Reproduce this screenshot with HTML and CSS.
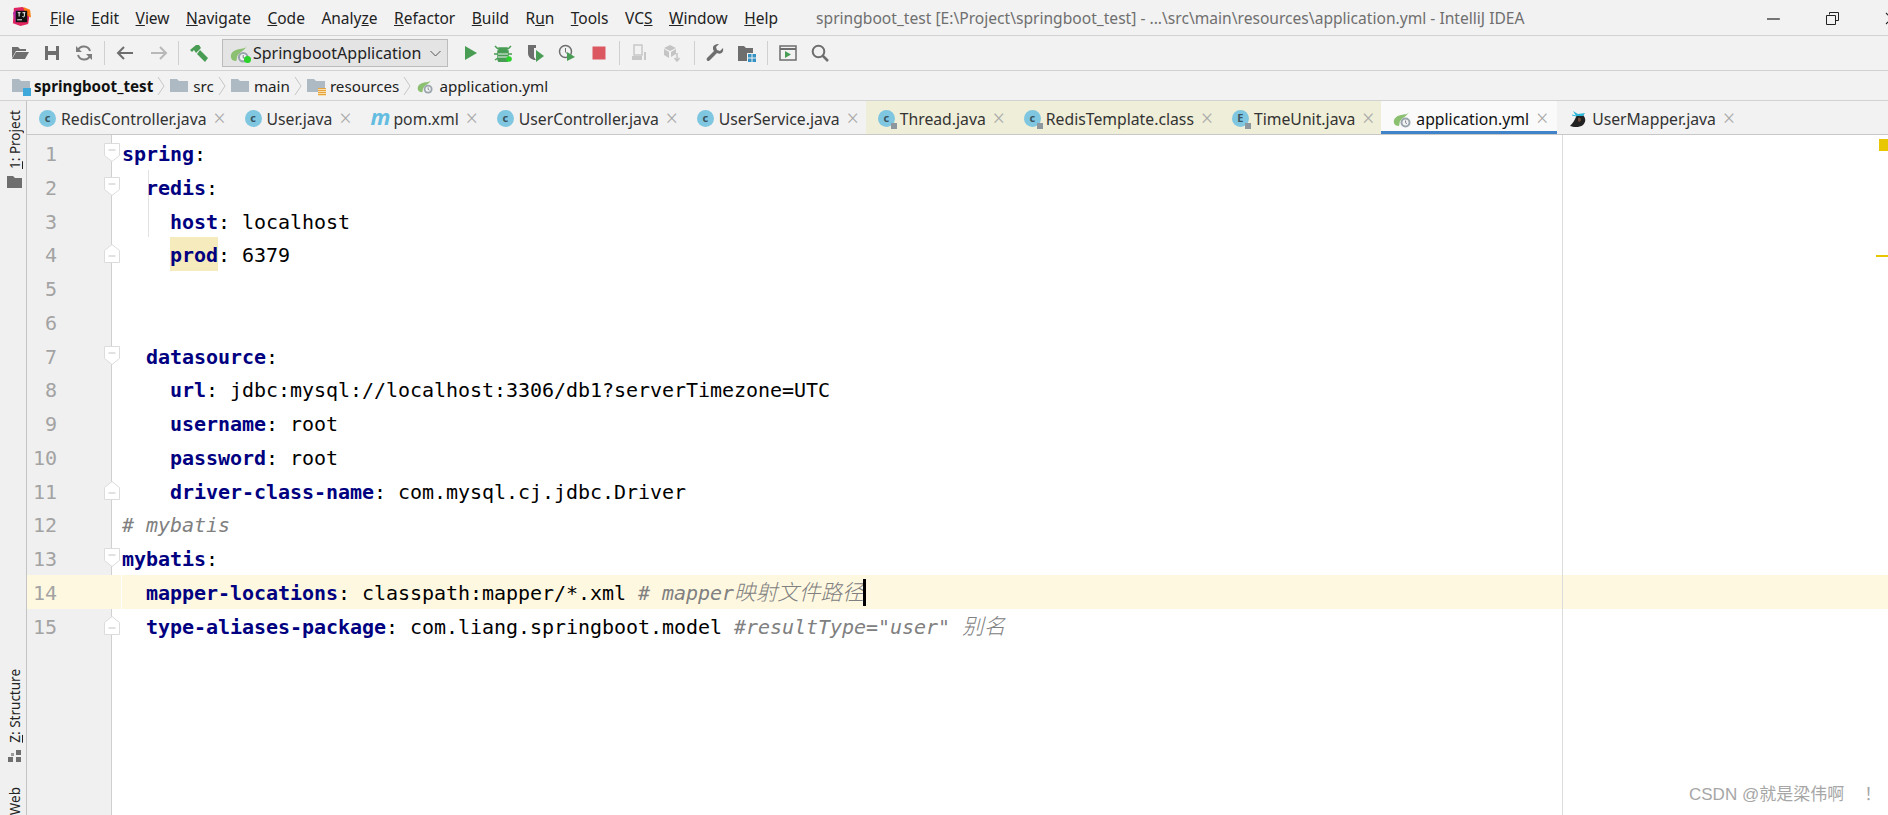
FILE: index.html
```html
<!DOCTYPE html>
<html lang="en">
<head>
<meta charset="utf-8">
<title>application.yml - IntelliJ IDEA</title>
<link rel="stylesheet" href="styles.css">
</head>
<body>
<svg class="defs" width="0" height="0">
  <symbol id="spring" viewBox="0 0 18 18">
    <path d="M16 1C15 5 12 4 8 5 3 6 0 9 1 13c.5 2 2 3 5 3 1-3 0-4 2-6 2-3 7-4 8-9z" fill="#8cc071"/>
    <circle cx="12.5" cy="12.5" r="5" fill="#9aa4ad"/>
    <circle cx="12.5" cy="12.5" r="3" fill="#f2f2f2"/>
    <path d="M12.5 10.5v2.2l1.5 1" stroke="#7a858e" stroke-width="1" fill="none"/>
  </symbol>
  <symbol id="folder" viewBox="0 0 18 16">
    <path d="M0 1h7l2 2h9v11H0z" fill="#aebac3"/>
  </symbol>
  <symbol id="chev" viewBox="0 0 8 20">
    <path d="M1 1l6 9-6 9" fill="none" stroke="#c6c6c6" stroke-width="1"/>
  </symbol>
  <symbol id="foldtop" viewBox="0 0 16 20">
    <path d="M.5 .5h15v12l-7.500 6-7.500-6z" fill="#fff" stroke="#dcdcdc"/>
    <path d="M4.500 7h7" stroke="#c4c4c4"/>
  </symbol>
  <symbol id="foldend" viewBox="0 0 16 20">
    <path d="M.5 19.500h15v-12l-7.500-6-7.500 6z" fill="#fff" stroke="#dcdcdc"/>
    <path d="M4.500 13h7" stroke="#c4c4c4"/>
  </symbol>
</svg>

<header class="titlebar">
  <svg class="logo" viewBox="0 0 20 20">
    <path d="M2 1l9-1 8 5-2 13-8 2-8-3z" fill="#e0245e"/>
    <path d="M12 0l7 3 1 8-6-3z" fill="#f97a12"/>
    <path d="M1 6l5-4 5 8-7 7z" fill="#b5289e"/>
    <rect x="4" y="4" width="12" height="12" fill="#111"/>
    <rect x="5.500" y="13" width="5" height="1" fill="#fff"/>
    <path d="M6 6h3M7.500 6v4M11 6h3M13 6v3.500c0 1-1 1-2 .5" stroke="#fff" stroke-width="1" fill="none"/>
  </svg>
  <nav class="menu">
    <span><u>F</u>ile</span><span><u>E</u>dit</span><span><u>V</u>iew</span><span><u>N</u>avigate</span><span><u>C</u>ode</span><span>Analy<u>z</u>e</span><span><u>R</u>efactor</span><span><u>B</u>uild</span><span>R<u>u</u>n</span><span><u>T</u>ools</span><span>VC<u>S</u></span><span><u>W</u>indow</span><span><u>H</u>elp</span>
  </nav>
  <div class="wintitle">springboot_test [E:\Project\springboot_test] - ...\src\main\resources\application.yml - IntelliJ IDEA</div>
  <div class="winctl">
    <svg viewBox="0 0 13 13" class="min"><path d="M0 7h13" stroke="#222" stroke-width="1.200"/></svg>
    <svg viewBox="0 0 13 13" class="max"><path d="M3.500 2.500V.5h9v8h-3M.5 3.500h9v9h-9z" stroke="#222" fill="none"/></svg>
    <svg viewBox="0 0 13 13" class="close"><path d="M1 1l11 11M12 1L1 12" stroke="#222" stroke-width="1.100"/></svg>
  </div>
</header>

<div class="toolbar">
  <svg class="ti" viewBox="0 0 18 18"><path d="M1 3h6l2 2h6v2H5L1 14z" fill="#6e6e6e"/><path d="M5 8h13l-4 7H1z" fill="#6e6e6e"/></svg>
  <svg class="ti" viewBox="0 0 18 18"><path d="M2 2h14v14H2z" fill="#6e6e6e"/><path d="M5 2h8v5H5z" fill="#f2f2f2"/><path d="M5 11h8v5H5z" fill="#f2f2f2"/></svg>
  <svg class="ti" viewBox="0 0 18 18"><path d="M15 7a6.500 6.500 0 0 0-12-1M3 11a6.500 6.500 0 0 0 12 1" stroke="#7d7d7d" stroke-width="2" fill="none"/><path d="M1 2v6h6zM17 16v-6h-6z" fill="#7d7d7d"/></svg>
  <i class="sep"></i>
  <svg class="ti" viewBox="0 0 18 18"><path d="M1.500 9H17M8 3L2 9l6 6" stroke="#6e6e6e" stroke-width="2" fill="none"/></svg>
  <svg class="ti fwd" viewBox="0 0 18 18"><path d="M1 9h15.500M10 3l6 6-6 6" stroke="#b8b8b8" stroke-width="2" fill="none"/></svg>
  <i class="sep tight"></i>
  <svg class="ti" viewBox="0 0 18 18"><path d="M0 6l6-5 3 0 2 3-5 5-2-3-2 2z" fill="#499c54"/><path d="M7 10l3-4 8 8-3 4z" fill="#499c54"/></svg>
  <div class="combo">
    <svg class="cicon"><use href="#spring"/></svg>
    <span>SpringbootApplication</span>
    <svg class="cchev" viewBox="0 0 11 7"><path d="M.5 1l5 5 5-5" stroke="#555" fill="none"/></svg>
    <i class="rundot"></i>
  </div>
  <svg class="ti" viewBox="0 0 18 18"><path d="M3 2l12 7-12 7z" fill="#499c54"/></svg>
  <svg class="ti" viewBox="0 0 18 18"><path d="M5 4h8v2H5zM4 7h10v8a3 3 0 0 1-3 3H7a3 3 0 0 1-3-3zM1 2l3 3M17 2l-3 3M0 10h4M14 10h4M1 16l3-2M17 16l-3-2" fill="#499c54" stroke="#499c54" stroke-width="1.500"/><path d="M4 10h10M4 13h10" stroke="#f2f2f2"/><circle cx="15" cy="15" r="2.800" fill="#2bd12b"/></svg>
  <svg class="ti" viewBox="0 0 18 18"><path d="M2 1h8v3H8v9l2 3H8c-3-1-6-3-6-7z" fill="#6e6e6e"/><path d="M10 6l8 6-8 6z" fill="#499c54"/></svg>
  <svg class="ti" viewBox="0 0 18 18"><circle cx="7.500" cy="7.500" r="6" fill="none" stroke="#6e6e6e" stroke-width="1.500"/><path d="M7.500 4v4l2 2" stroke="#6e6e6e" fill="none"/><path d="M9 8l8 5-8 4z" fill="#499c54"/></svg>
  <svg class="ti" viewBox="0 0 18 18"><rect x="2.500" y="2.500" width="13" height="13" fill="#db5860"/></svg>
  <i class="sep"></i>
  <svg class="ti" viewBox="0 0 18 18"><path d="M3 1h8v10H3z" fill="none" stroke="#c8c8c8" stroke-width="1.500"/><path d="M1 12h10v4H1z" fill="#c8c8c8"/><path d="M14 8v8" stroke="#c8c8c8" stroke-width="2"/></svg>
  <svg class="ti" viewBox="0 0 18 18"><path d="M7 1l6 3-6 3-6-3zM1 5l5 3v6l-5-3zM8 8l5-3v5l-5 3z" fill="#c4c4c4"/><path d="M14 9v8M11.500 14l2.500 3 2.500-3" stroke="#c4c4c4" stroke-width="1.500" fill="none"/></svg>
  <i class="sep mid"></i>
  <svg class="ti" viewBox="0 0 18 18"><path d="M17 4l-3 3-3-1-1-3 3-3c-3 0-6 1-6 4 0 1 0 2 1 3L1 14c-1 1 0 3 1 3s1 0 2-1l7-7c4 2 7-1 6-5z" fill="#6e6e6e"/></svg>
  <svg class="ti" viewBox="0 0 18 18"><path d="M0 2h6l2 2h7v5H9v8H0z" fill="#6e6e6e"/><path d="M10 10h3.500v3.500H10zM14.500 10H18v3.500h-3.500zM10 14.500h3.500V18H10zM14.500 14.500H18V18h-3.500z" fill="#3592c4"/></svg>
  <i class="sep"></i>
  <svg class="ti" viewBox="0 0 18 18"><rect x="1" y="2" width="16" height="14" fill="none" stroke="#6e6e6e" stroke-width="1.500"/><path d="M1 5h16" stroke="#6e6e6e" stroke-width="2"/><path d="M6 7l6 3.500-6 3.500z" fill="#499c54"/></svg>
  <svg class="ti" viewBox="0 0 18 18"><circle cx="7.500" cy="7.500" r="5.800" fill="none" stroke="#6e6e6e" stroke-width="2"/><path d="M11.500 11.500l5.500 5.500" stroke="#6e6e6e" stroke-width="2.500"/></svg>
</div>

<nav class="crumbs">
  <span class="cr first">
    <span class="fwrap"><svg class="fi"><use href="#folder"/></svg><i class="modbadge"></i></span>
    <b>springboot_test</b>
  </span>
  <svg class="cv"><use href="#chev"/></svg>
  <span class="cr"><svg class="fi"><use href="#folder"/></svg>src</span>
  <svg class="cv"><use href="#chev"/></svg>
  <span class="cr"><svg class="fi"><use href="#folder"/></svg>main</span>
  <svg class="cv"><use href="#chev"/></svg>
  <span class="cr"><span class="fwrap"><svg class="fi"><use href="#folder"/></svg><i class="resbadge"></i></span>resources</span>
  <svg class="cv"><use href="#chev"/></svg>
  <span class="cr"><svg class="fi"><use href="#spring"/></svg>application.yml</span>
</nav>

<div class="main">
  <aside class="strip">
    <span class="vt top"><u>1</u>: Project</span>
    <svg class="sfolder" viewBox="0 0 15 12"><path d="M0 0h6l2 2h7v10H0z" fill="#6e6e6e"/></svg>
    <span class="vt struct"><u>Z</u>: Structure</span>
    <svg class="sstruct" viewBox="0 0 13 12"><path d="M8 0h5v5H8zM0 7h5v5H0zM8 7h5v5H8z" fill="#6e6e6e"/><path d="M3 3h3v3H3z" fill="#999"/></svg>
    <span class="vt web">Web</span>
  </aside>

  <div class="workspace">
    <div class="tabs">
      <div class="tab"><span class="cls">c</span><span class="tn">RedisController.java</span><span class="tx">×</span></div>
      <div class="tab"><span class="cls">c</span><span class="tn">User.java</span><span class="tx">×</span></div>
      <div class="tab"><span class="mvn">m</span><span class="tn">pom.xml</span><span class="tx">×</span></div>
      <div class="tab"><span class="cls">c</span><span class="tn">UserController.java</span><span class="tx">×</span></div>
      <div class="tab"><span class="cls">c</span><span class="tn">UserService.java</span><span class="tx">×</span></div>
      <div class="tab lib"><span class="cls lock">c</span><span class="tn">Thread.java</span><span class="tx">×</span></div>
      <div class="tab lib"><span class="cls lock">c</span><span class="tn">RedisTemplate.class</span><span class="tx">×</span></div>
      <div class="tab lib"><span class="cls lock">E</span><span class="tn">TimeUnit.java</span><span class="tx">×</span></div>
      <div class="tab active"><svg class="ticon"><use href="#spring"/></svg><span class="tn">application.yml</span><span class="tx">×</span></div>
      <div class="tab"><svg class="ticon" viewBox="0 0 18 18"><path d="M1 16c3 1 9 2 13-1 3-3 3-7 0-10-3-2-6-1-7 2-1 2-2 5-6 9z" fill="#222"/><path d="M9 8c2-1 3 0 3 2s-2 2-3 1z" fill="#6b4a3a"/><path d="M4 1l5 3 7-1-2 3-7 0z" fill="#2bb8d8"/><path d="M3 5l4 1" stroke="#2bb8d8"/></svg><span class="tn">UserMapper.java</span><span class="tx">×</span></div>
    </div>

    <section class="editor">
      <div class="row"><span class="ln">1</span><span class="fold"><svg class="ft"><use href="#foldtop"/></svg></span><code><b>spring</b>:</code></div>
      <div class="row"><span class="ln">2</span><span class="fold"><svg class="ft"><use href="#foldtop"/></svg></span><code>  <b>redis</b>:</code></div>
      <div class="row"><span class="ln">3</span><span class="fold"></span><code>    <b>host</b>: localhost</code></div>
      <div class="row"><span class="ln">4</span><span class="fold"><svg class="fe"><use href="#foldend"/></svg></span><code>    <b class="hit">prod</b>: 6379</code></div>
      <div class="row"><span class="ln">5</span><span class="fold"></span><code></code></div>
      <div class="row"><span class="ln">6</span><span class="fold"></span><code></code></div>
      <div class="row"><span class="ln">7</span><span class="fold"><svg class="ft"><use href="#foldtop"/></svg></span><code>  <b>datasource</b>:</code></div>
      <div class="row"><span class="ln">8</span><span class="fold"></span><code>    <b>url</b>: jdbc:mysql://localhost:3306/db1?serverTimezone=UTC</code></div>
      <div class="row"><span class="ln">9</span><span class="fold"></span><code>    <b>username</b>: root</code></div>
      <div class="row"><span class="ln">10</span><span class="fold"></span><code>    <b>password</b>: root</code></div>
      <div class="row"><span class="ln">11</span><span class="fold"><svg class="fe"><use href="#foldend"/></svg></span><code>    <b>driver-class-name</b>: com.mysql.cj.jdbc.Driver</code></div>
      <div class="row"><span class="ln">12</span><span class="fold"></span><code><em># mybatis</em></code></div>
      <div class="row"><span class="ln">13</span><span class="fold"><svg class="ft"><use href="#foldtop"/></svg></span><code><b>mybatis</b>:</code></div>
      <div class="row current"><span class="ln">14</span><span class="fold"></span><code>  <b>mapper-locations</b>: classpath:mapper/*.xml <em># mapper<span class="cjk">映射文件路径</span></em><i class="caret"></i></code></div>
      <div class="row"><span class="ln">15</span><span class="fold"><svg class="fe"><use href="#foldend"/></svg></span><code>  <b>type-aliases-package</b>: com.liang.springboot.model <em>#resultType="user" <span class="cjk">别名</span></em></code></div>
      <i class="guide g1"></i>
      <i class="margin"></i>
      <i class="mark m1"></i>
      <i class="mark m2"></i>
    </section>
  </div>
</div>

<div class="watermark">CSDN @就是梁伟啊<span class="bang">！</span></div>
</body>
</html>
```

FILE: styles.css
```css
* { box-sizing: border-box; }
html, body { margin: 0; height: 100%; overflow: hidden; }
body {
  display: flex;
  flex-direction: column;
  height: 815px;
  background: #f2f2f2;
  font-family: "Noto Sans", "Open Sans", sans-serif;
  font-size: 15.500px;
  color: #222;
  position: relative;
}
.defs { position: absolute; }

.titlebar {
  height: 36px;
  flex: none;
  display: flex;
  align-items: center;
  padding-left: 12px;
  border-bottom: 1px solid #d2d2d2;
}
.logo { width: 19px; height: 19px; flex: none; margin-top: -3px; }
.menu { display: flex; gap: 16.500px; margin-left: 19px; }
.menu span { white-space: nowrap; }
.wintitle { margin-left: 38px; color: #6f6f6f; white-space: nowrap; font-size: 15.600px; }
.winctl { margin-left: auto; display: flex; width: 121px; flex: none; align-self: flex-start; margin-top: 12px; }
.winctl svg { width: 13px; height: 13px; flex: none; }
.winctl .max { margin-left: 46px; }
.winctl .close { margin-left: 46px; }

.toolbar {
  height: 35px;
  flex: none;
  display: flex;
  align-items: center;
  gap: 14px;
  padding-left: 11px;
  border-bottom: 1px solid #d2d2d2;
}
.ti { width: 18px; height: 18px; flex: none; }
.fwd { margin-left: 2px; }
.sep { width: 1px; height: 24px; background: #d0d0d0; margin: 0 -3px; flex: none; }
.sep.tight { margin-left: -4px; }
.sep.mid { margin-left: -1px; }
.combo {
  width: 226px;
  height: 28px;
  flex: none;
  display: flex;
  align-items: center;
  background: #e4e4e4;
  border: 1px solid #bcbcbc;
  padding-left: 7px;
  position: relative;
  color: #222;
  font-size: 16px;
}
.cicon { width: 19px; height: 19px; flex: none; }
.combo span { margin-left: 4px; white-space: nowrap; }
.cchev { width: 11px; height: 7px; margin-left: auto; margin-right: 6px; flex: none; }
.rundot { position: absolute; left: 21px; top: 16px; width: 7px; height: 7px; border-radius: 50%; background: #2bd12b; }

.crumbs {
  height: 30px;
  flex: none;
  display: flex;
  align-items: center;
  padding-left: 12px;
  border-bottom: 1px solid #d2d2d2;
  font-size: 15.200px;
}
.cr { display: flex; align-items: center; gap: 5px; white-space: nowrap; }
.cr.first { gap: 4px; }
.cr b { color: #111; font-weight: 700; }
.fi { width: 18px; height: 16px; flex: none; }
.fwrap { position: relative; display: flex; }
.modbadge { position: absolute; right: -1px; bottom: -2px; width: 8px; height: 8px; background: #3fa9dc; }
.resbadge { position: absolute; right: -1px; bottom: -2px; width: 8px; height: 8px; background: repeating-linear-gradient(#e8a33d 0 1px, #f6e0b0 1px 2px); }
.cv { width: 8px; height: 20px; margin: 0 5px 0 4px; flex: none; }

.main { flex: 1; display: flex; min-height: 0; }
.strip {
  width: 27px;
  flex: none;
  background: #f0f0f0;
  border-right: 1px solid #c4c4c4;
  display: flex;
  flex-direction: column;
  align-items: center;
  overflow: hidden;
  padding-left: 3px;
}
.vt {
  writing-mode: vertical-rl;
  transform: rotate(180deg);
  font-size: 13.500px;
  line-height: 18px;
  white-space: nowrap;
  flex: none;
}
.top { margin-top: 9px; }
.sfolder { width: 15px; height: 12px; margin-top: 7px; flex: none; }
.struct { margin-top: auto; }
.sstruct { width: 13px; height: 12px; margin-top: 7px; flex: none; }
.web { margin-top: 25px; }

.workspace { flex: 1; min-width: 0; display: flex; flex-direction: column; }
.tabs {
  height: 34px;
  flex: none;
  display: flex;
  border-bottom: 1px solid #c8c8c8;
  font-size: 15.750px;
}
.tab {
  display: flex;
  align-items: center;
  height: 33px;
  padding: 2px 7px 0 12px;
  white-space: nowrap;
  color: #333;
}
.tab.lib { background: #efeed8; }
.tab.active { background: #fafafa; box-shadow: inset 0 -3px 0 #4083c9; color: #111; padding-right: 9px; }
.cls {
  width: 17px;
  height: 17px;
  border-radius: 50%;
  background: #7fc6e0;
  color: #3a5560;
  font-size: 11px;
  font-weight: 700;
  line-height: 16px;
  text-align: center;
  flex: none;
  position: relative;
}
.lock::after { content: ""; position: absolute; right: -2px; bottom: -2px; width: 6px; height: 6px; background: #8d979e; }
.mvn {
  width: 18px;
  flex: none;
  color: #64bde0;
  font: italic 700 22px/20px "Noto Sans", sans-serif;
  margin-top: -5px;
}
.ticon { width: 18px; height: 18px; flex: none; }
.tn { margin-left: 5px; }
.tx { margin-left: 7px; color: #a8a8a8; font-size: 21px; line-height: 1; width: 12px; text-align: center; font-weight: 300; }

.editor {
  flex: 1;
  min-height: 0;
  background: linear-gradient(to right, #f0f0f0 84px, #d0d0d0 84px 85px, #fff 85px);
  position: relative;
  overflow: hidden;
  padding-top: 1px;
  font-family: "DejaVu Sans Mono", "Noto Sans CJK SC", monospace;
  font-size: 20px;
  letter-spacing: -.04px;
}
.row { display: flex; height: 33.750px; line-height: 37.500px; position: relative; }
.ln {
  width: 84px;
  flex: none;
  color: #a3a3a3;
  text-align: right;
  padding-right: 54px;
  font-size: 20px;
}
.fold { width: 11px; flex: none; position: relative; }
.ft, .fe { position: absolute; left: -7px; width: 16px; height: 20px; }
.ft { top: 7px; }
.fe { top: 6px; }
code { font: inherit; line-height: inherit; white-space: pre; color: #000; position: relative; z-index: 1; }
code b { color: #000080; font-weight: 700; }
code em { color: #808080; font-style: italic; }
.cjk { font-family: "Noto Sans CJK SC", sans-serif; font-size: 21.600px; font-weight: 300; letter-spacing: 0; line-height: 0; }
.hit { background: #f6ebbc; display: inline-block; height: 33.750px; }
.current { background: #fff8e1; }
.current .fold { box-shadow: inset -1px 0 0 #fff; }
.caret { position: absolute; right: -2px; top: 4px; width: 2.500px; height: 27px; background: #000; }
.guide { position: absolute; width: 1px; background: #e2e2e2; }
.g1 { left: 121px; top: 35px; height: 67px; }
.margin { position: absolute; left: 1535px; top: 0; bottom: 0; width: 1px; background: #dcdcdc; z-index: 2; }
.mark { position: absolute; right: 0; background: #e8c600; z-index: 2; }
.m1 { top: 4px; width: 9px; height: 12px; }
.m2 { top: 120px; width: 12px; height: 2px; }

.watermark {
  position: absolute;
  left: 1689px;
  top: 785px;
  font-family: "Liberation Sans", "Noto Sans CJK SC", sans-serif;
  font-size: 17px;
  line-height: 20px;
  color: #a6a6a6;
  white-space: nowrap;
}
.bang { margin-left: 20px; }
```
